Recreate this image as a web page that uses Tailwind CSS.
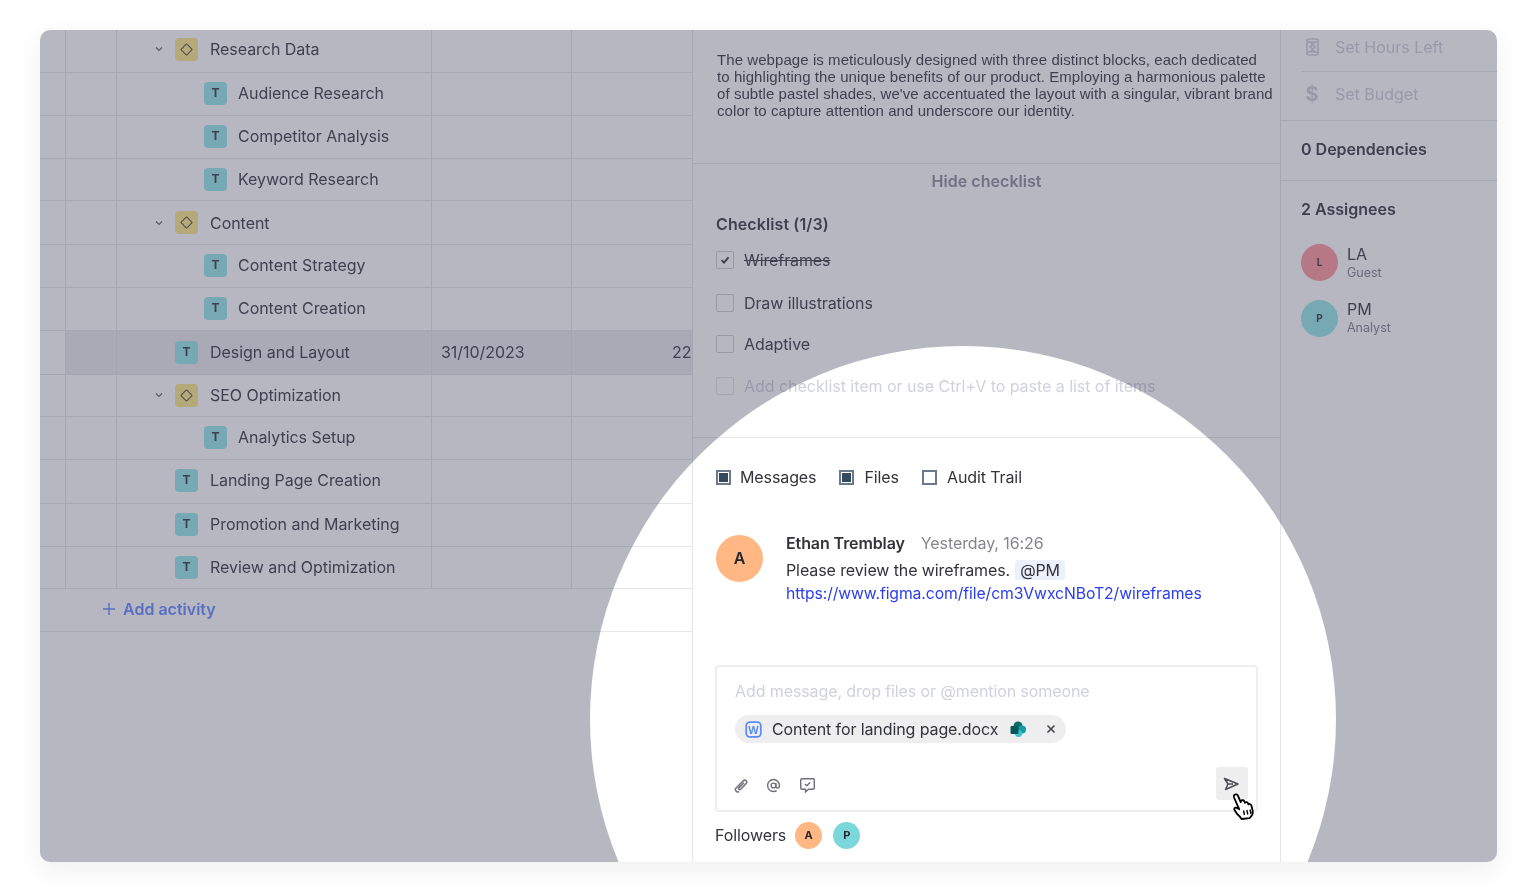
<!DOCTYPE html>
<html lang="en">
<head>
<meta charset="utf-8">
<script src="https://cdn.jsdelivr.net/npm/@tailwindcss/browser@4"></script>
<title>Task detail</title>
</head>
<body class="bg-white">
<div class="w-[1536px] h-[896px] pt-[30px] pl-[40px] bg-white font-['Inter',sans-serif] text-[#3f3f48] tracking-[-0.1px]">
<div class="relative w-[1457px] h-[832px] rounded-[10px] overflow-hidden flex bg-white shadow-[0_8px_24px_rgba(60,60,90,0.08)] blur-[0.4px]">

  <!-- Table -->
  <div class="w-[652px] shrink-0 flex flex-col text-[16px] tracking-[-0.04px]">
    <div class="h-[43px] flex border-b border-[#e6e6ea]"><div class="w-[26px] border-r border-[#e6e6ea]"></div><div class="w-[51px] border-r border-[#e6e6ea]"></div><div class="w-[315px] border-r border-[#e6e6ea] flex items-center pl-[37px] pb-[4px]"><svg class="w-[10px] h-[10px] mr-[11px]" viewBox="0 0 10 10" fill="none" stroke="#6b6b75" stroke-width="1.2"><path d="M2 3.5 5 6.5 8 3.5"/></svg><div class="w-[23px] h-[23px] rounded-[4px] bg-[#ffe98c] flex items-center justify-center mr-[12px]"><div class="w-[9px] h-[9px] rotate-45 border border-[#56524a] rounded-[1px]"></div></div><span>Research Data</span></div><div class="w-[140px] border-r border-[#e6e6ea]"></div></div>

    <div class="h-[43px] flex border-b border-[#e6e6ea]"><div class="w-[26px] border-r border-[#e6e6ea]"></div><div class="w-[51px] border-r border-[#e6e6ea]"></div><div class="w-[315px] border-r border-[#e6e6ea] flex items-center pl-[87px] pb-[2px]"><div class="w-[23px] h-[23px] rounded-[4px] bg-[#99e8ea] flex items-center justify-center mr-[11px] text-[12px] font-bold">T</div><span>Audience Research</span></div><div class="w-[140px] border-r border-[#e6e6ea]"></div></div>

    <div class="h-[43px] flex border-b border-[#e6e6ea]"><div class="w-[26px] border-r border-[#e6e6ea]"></div><div class="w-[51px] border-r border-[#e6e6ea]"></div><div class="w-[315px] border-r border-[#e6e6ea] flex items-center pl-[87px] pb-[2px]"><div class="w-[23px] h-[23px] rounded-[4px] bg-[#99e8ea] flex items-center justify-center mr-[11px] text-[12px] font-bold">T</div><span>Competitor Analysis</span></div><div class="w-[140px] border-r border-[#e6e6ea]"></div></div>

    <div class="h-[42px] flex border-b border-[#e6e6ea]"><div class="w-[26px] border-r border-[#e6e6ea]"></div><div class="w-[51px] border-r border-[#e6e6ea]"></div><div class="w-[315px] border-r border-[#e6e6ea] flex items-center pl-[87px] pb-[1px]"><div class="w-[23px] h-[23px] rounded-[4px] bg-[#99e8ea] flex items-center justify-center mr-[11px] text-[12px] font-bold">T</div><span>Keyword Research</span></div><div class="w-[140px] border-r border-[#e6e6ea]"></div></div>

    <div class="h-[44px] flex border-b border-[#e6e6ea]"><div class="w-[26px] border-r border-[#e6e6ea]"></div><div class="w-[51px] border-r border-[#e6e6ea]"></div><div class="w-[315px] border-r border-[#e6e6ea] flex items-center pl-[37px]"><svg class="w-[10px] h-[10px] mr-[11px]" viewBox="0 0 10 10" fill="none" stroke="#6b6b75" stroke-width="1.2"><path d="M2 3.5 5 6.5 8 3.5"/></svg><div class="w-[23px] h-[23px] rounded-[4px] bg-[#ffe98c] flex items-center justify-center mr-[12px]"><div class="w-[9px] h-[9px] rotate-45 border border-[#56524a] rounded-[1px]"></div></div><span>Content</span></div><div class="w-[140px] border-r border-[#e6e6ea]"></div></div>

    <div class="h-[43px] flex border-b border-[#e6e6ea]"><div class="w-[26px] border-r border-[#e6e6ea]"></div><div class="w-[51px] border-r border-[#e6e6ea]"></div><div class="w-[315px] border-r border-[#e6e6ea] flex items-center pl-[87px] pb-[2px]"><div class="w-[23px] h-[23px] rounded-[4px] bg-[#99e8ea] flex items-center justify-center mr-[11px] text-[12px] font-bold">T</div><span>Content Strategy</span></div><div class="w-[140px] border-r border-[#e6e6ea]"></div></div>

    <div class="h-[43px] flex border-b border-[#e6e6ea]"><div class="w-[26px] border-r border-[#e6e6ea]"></div><div class="w-[51px] border-r border-[#e6e6ea]"></div><div class="w-[315px] border-r border-[#e6e6ea] flex items-center pl-[87px] pb-[2px]"><div class="w-[23px] h-[23px] rounded-[4px] bg-[#99e8ea] flex items-center justify-center mr-[11px] text-[12px] font-bold">T</div><span>Content Creation</span></div><div class="w-[140px] border-r border-[#e6e6ea]"></div></div>

    <div class="h-[44px] flex border-b border-[#e2e2e6]"><div class="w-[26px] border-r border-[#e6e6ea]"></div><div class="flex-1 flex bg-[#ebebee] overflow-hidden"><div class="w-[51px] shrink-0 border-r border-[#e2e2e6]"></div><div class="w-[315px] shrink-0 border-r border-[#e2e2e6] flex items-center pl-[58px] pb-[1px]"><div class="w-[23px] h-[23px] rounded-[4px] bg-[#99e8ea] flex items-center justify-center mr-[12px] text-[12px] font-bold">T</div><span>Design and Layout</span></div><div class="w-[140px] shrink-0 border-r border-[#e2e2e6] flex items-center pl-[9px] pb-[1px]">31/10/2023</div><div class="flex-1 flex items-center pl-[100px] pb-[1px] whitespace-nowrap">22/11/2023</div></div></div>

    <div class="h-[42px] flex border-b border-[#e6e6ea]"><div class="w-[26px] border-r border-[#e6e6ea]"></div><div class="w-[51px] border-r border-[#e6e6ea]"></div><div class="w-[315px] border-r border-[#e6e6ea] flex items-center pl-[37px] pb-[1px]"><svg class="w-[10px] h-[10px] mr-[11px]" viewBox="0 0 10 10" fill="none" stroke="#6b6b75" stroke-width="1.2"><path d="M2 3.5 5 6.5 8 3.5"/></svg><div class="w-[23px] h-[23px] rounded-[4px] bg-[#ffe98c] flex items-center justify-center mr-[12px]"><div class="w-[9px] h-[9px] rotate-45 border border-[#56524a] rounded-[1px]"></div></div><span>SEO Optimization</span></div><div class="w-[140px] border-r border-[#e6e6ea]"></div></div>

    <div class="h-[43px] flex border-b border-[#e6e6ea]"><div class="w-[26px] border-r border-[#e6e6ea]"></div><div class="w-[51px] border-r border-[#e6e6ea]"></div><div class="w-[315px] border-r border-[#e6e6ea] flex items-center pl-[87px] pb-[2px]"><div class="w-[23px] h-[23px] rounded-[4px] bg-[#99e8ea] flex items-center justify-center mr-[11px] text-[12px] font-bold">T</div><span>Analytics Setup</span></div><div class="w-[140px] border-r border-[#e6e6ea]"></div></div>

    <div class="h-[44px] flex border-b border-[#e6e6ea]"><div class="w-[26px] border-r border-[#e6e6ea]"></div><div class="w-[51px] border-r border-[#e6e6ea]"></div><div class="w-[315px] border-r border-[#e6e6ea] flex items-center pl-[58px] pb-[3px]"><div class="w-[23px] h-[23px] rounded-[4px] bg-[#99e8ea] flex items-center justify-center mr-[12px] text-[12px] font-bold">T</div><span>Landing Page Creation</span></div><div class="w-[140px] border-r border-[#e6e6ea]"></div></div>

    <div class="h-[43px] flex border-b border-[#e6e6ea]"><div class="w-[26px] border-r border-[#e6e6ea]"></div><div class="w-[51px] border-r border-[#e6e6ea]"></div><div class="w-[315px] border-r border-[#e6e6ea] flex items-center pl-[58px] pb-[2px]"><div class="w-[23px] h-[23px] rounded-[4px] bg-[#99e8ea] flex items-center justify-center mr-[12px] text-[12px] font-bold">T</div><span>Promotion and Marketing</span></div><div class="w-[140px] border-r border-[#e6e6ea]"></div></div>

    <div class="h-[42px] flex border-b border-[#e6e6ea]"><div class="w-[26px] border-r border-[#e6e6ea]"></div><div class="w-[51px] border-r border-[#e6e6ea]"></div><div class="w-[315px] border-r border-[#e6e6ea] flex items-center pl-[58px] pb-[1px]"><div class="w-[23px] h-[23px] rounded-[4px] bg-[#99e8ea] flex items-center justify-center mr-[12px] text-[12px] font-bold">T</div><span>Review and Optimization</span></div><div class="w-[140px] border-r border-[#e6e6ea]"></div></div>

    <div class="h-[43px] flex items-center border-b border-[#e6e6ea] pl-[62px] pb-[2px] text-[#6a8bff] font-semibold tracking-normal"><svg class="w-[14px] h-[14px] mr-[7px]" viewBox="0 0 14 14" fill="none" stroke="#6a8bff" stroke-width="1.4"><path d="M7 1v12M1 7h12"/></svg><span>Add activity</span></div>
  </div>

  <!-- Main -->
  <div class="w-[589px] shrink-0 border-x border-[#e6e6ea] flex flex-col">
    <div class="h-[134px] border-b border-[#e6e6ea] pl-[24px] pt-[21px] font-['Liberation_Sans',sans-serif] text-[15px] tracking-[0.07px] leading-[17px] whitespace-nowrap">
      The webpage is meticulously designed with three distinct blocks, each dedicated<br>
      to highlighting the unique benefits of our product. Employing a harmonious palette<br>
      of subtle pastel shades, we've accentuated the layout with a singular, vibrant brand<br>
      color to capture attention and underscore our identity.
    </div>
    <div class="h-[274px] border-b border-[#e6e6ea] pl-[23px] flex flex-col">
      <div class="h-[34px] shrink-0 flex items-center justify-center pr-[23px] font-semibold text-[#8f909c] tracking-[0.05px]">Hide checklist</div>
      <div class="h-[52px] shrink-0 flex items-center font-semibold text-[16px] tracking-[0.1px]">Checklist (1/3)</div>
      <div class="h-[42px] shrink-0 flex items-center -mt-[11px]"><div class="w-[18px] h-[18px] rounded-[2px] border border-[#cfcfd6] flex items-center justify-center mr-[10px]"><svg class="w-[12px] h-[12px]" viewBox="0 0 12 12" fill="none" stroke="#3a3a44" stroke-width="1.8"><path d="M2.5 6.2 5 8.600 9.500 3.400"/></svg></div><span class="line-through">Wireframes</span></div>
      <div class="h-[43px] shrink-0 flex items-center"><div class="w-[18px] h-[18px] rounded-[2px] border border-[#cfcfd6] mr-[10px]"></div><span>Draw illustrations</span></div>
      <div class="h-[41px] shrink-0 flex items-center pb-[1px]"><div class="w-[18px] h-[18px] rounded-[2px] border border-[#cfcfd6] mr-[10px]"></div><span>Adaptive</span></div>
      <div class="h-[42px] shrink-0 flex items-center"><div class="w-[18px] h-[18px] rounded-[2px] border border-[#e4e4e9] mr-[10px]"></div><span class="text-[#d0d1dc] tracking-[-0.04px]">Add checklist item or use Ctrl+V to paste a list of items</span></div>
    </div>
    <div class="flex items-center h-[79px] pl-[23px] pb-[1px] text-[#33333b]">
      <div class="w-[15px] h-[15px] border-2 border-[#6a7a8a] bg-[#34495e] mr-[9px] shadow-[inset_0_0_0_1px_#fff]"></div><span class="mr-[23px]">Messages</span>
      <div class="w-[15px] h-[15px] border-2 border-[#6a7a8a] bg-[#34495e] mr-[10px] shadow-[inset_0_0_0_1px_#fff]"></div><span class="mr-[23px]">Files</span>
      <div class="w-[15px] h-[15px] border-2 border-[#6a7a8a] mr-[10px]"></div><span>Audit Trail</span>
    </div>
    <div class="flex pl-[23px] pt-[18px] h-[148px] shrink-0">
      <div class="w-[47px] h-[47px] rounded-full bg-[#ffb883] flex items-center justify-center font-semibold text-[#26262c] mr-[23px] shrink-0 pb-[2px]">A</div>
      <div class="flex flex-col -mt-[5px]">
        <div class="h-[26px] flex items-center"><span class="font-semibold text-[#33333b]">Ethan Tremblay</span><span class="ml-[16px] text-[#85858f]">Yesterday, 16:26</span></div>
        <div class="h-[28px] flex items-center text-[#33333b]"><span>Please review the wireframes.</span><span class="ml-[5px] px-[5px] bg-[#ecf0fb] rounded-[3px] leading-[20px]">@PM</span></div>
        <a class="h-[20px] flex items-center text-[#2b3df0] text-[15.75px]">https://www.figma.com/file/cm3VwxcNBoT2/wireframes</a>
      </div>
    </div>
    <div class="ml-[22px] w-[543px] h-[147px] shrink-0 border-2 border-[#eeeef0] rounded-[4px] flex flex-col pl-[18px] pr-[8px]">
      <div class="h-[48px] shrink-0 flex items-center text-[#d0d1dc]">Add message, drop files or @mention someone</div>
      <div class="w-[331px] h-[28px] shrink-0 rounded-full bg-[#eeeeee] flex items-center pl-[10px] text-[#33333b]">
        <svg class="w-[17px] h-[17px] mr-[10px] shrink-0" viewBox="0 0 17 17" fill="none"><rect x="1.200" y="1.200" width="14.600" height="14.600" rx="3.500" stroke="#5b8cf5" stroke-width="1.700"/><text x="8.500" y="12.800" text-anchor="middle" font-family="Liberation Sans" font-weight="700" font-size="11" fill="#5b8cf5">W</text></svg>
        <span class="whitespace-nowrap">Content for landing page.docx</span>
        <svg class="w-[18px] h-[18px] ml-[11px] shrink-0" viewBox="0 0 18 18"><circle cx="9" cy="6" r="4.500" fill="#0b6a6e"/><circle cx="13" cy="9.500" r="4" fill="#1a9ba1"/><circle cx="9.500" cy="13.500" r="3.500" fill="#37c6d0"/><rect x="1.500" y="6" width="8" height="8" rx="1" fill="#04585c"/></svg>
        <svg class="w-[10px] h-[10px] ml-[19px] shrink-0" viewBox="0 0 10 10" fill="none" stroke="#44444c" stroke-width="1.600"><path d="M1.500 1.500l7 7M8.500 1.500l-7 7"/></svg>
      </div>
      <div class="flex-1 flex items-end justify-between pb-[10px]">
        <div class="flex items-center gap-[17px] pb-[6px] -ml-[1px]">
          <svg class="w-[15px] h-[15px]" viewBox="0 0 15 15" fill="none" stroke="#6f6f78" stroke-width="1.500"><path d="M5 13.500c-1 .6-2.300.3-3-.5-.8-.9-.7-2.200.1-3L9 3c1-1 2.400-1 3.200-.2.800.9.700 2.100-.2 3L6.600 11.200c-.5.500-1.200.6-1.700.1s-.4-1.100.1-1.700L10 4.800"/></svg>
          <svg class="w-[15px] h-[15px]" viewBox="0 0 15 15" fill="none" stroke="#6f6f78" stroke-width="1.400"><circle cx="7.500" cy="7.500" r="2.400"/><path d="M9.900 5v3.600c0 1 .7 1.500 1.500 1.500s2-.8 2-2.600c0-3.200-2.600-6-5.900-6S1.600 4.200 1.600 7.500s2.600 6 5.900 6c1.300 0 2.300-.3 3.200-.9"/></svg>
          <svg class="w-[17px] h-[17px] ml-[1px]" viewBox="0 0 17 17" fill="none" stroke="#6f6f78" stroke-width="1.400"><path d="M3 1.800h11c.8 0 1.300.6 1.300 1.300v7.800c0 .7-.5 1.300-1.300 1.300H9.500L6.500 15v-2.800H3c-.8 0-1.300-.6-1.300-1.300V3.100c0-.7.5-1.300 1.300-1.300z"/><path d="M6 7l1.800 1.700L11 5.500"/></svg>
        </div>
        <div class="w-[32px] h-[33px] rounded-[3px] bg-[#eeeeee] flex items-center justify-center pr-[2px]">
          <svg class="w-[16px] h-[16px]" viewBox="0 0 16 16" fill="none" stroke="#4c4c54" stroke-width="1.500" stroke-linejoin="round"><path d="M1.500 2.500 15 8 2.500 13.500 5 8z"/><path d="M5 8h5"/></svg>
        </div>
      </div>
    </div>
    <div class="h-[46px] ml-[22px] shrink-0 flex items-center">
      <span class="text-[#33333b] mr-[9px]">Followers</span>
      <div class="w-[27px] h-[27px] rounded-full bg-[#ffb883] flex items-center justify-center text-[11px] font-bold text-[#26262c] mr-[11px]">A</div>
      <div class="w-[27px] h-[27px] rounded-full bg-[#7bd8da] flex items-center justify-center text-[11px] font-bold text-[#26262c]">P</div>
    </div>
  </div>

  <!-- Right -->
  <div class="flex-1 flex flex-col tracking-normal">
    <div class="h-[91px] border-b border-[#e6e6ea] pl-[20px] text-[#cfd0d9]">
      <div class="h-[42px] border-b border-[#e6e6ea] flex items-center pb-[8px]">
        <svg class="w-[22px] h-[18px] mr-[12px]" viewBox="0 0 22 18" fill="none" stroke="#cfd0d9" stroke-width="1.600"><rect x="6" y="1" width="11" height="16" rx="2"/><path d="M6 4h11M6 14h11M9 4l5 4.800-5 5.200M14 4l-5 4.800 5 5.200"/></svg>
        <span>Set Hours Left</span>
      </div>
      <div class="h-[48px] flex items-center pb-[4px]">
        <span class="w-[22px] mr-[12px] text-center font-bold text-[20px]">$</span>
        <span>Set Budget</span>
      </div>
    </div>
    <div class="h-[60px] border-b border-[#e6e6ea] pl-[20px] pb-[4px] flex items-center font-semibold text-[16px]">0 Dependencies</div>
    <div class="pl-[20px] flex flex-col">
      <div class="h-[56px] flex items-center font-semibold text-[16px]">2 Assignees</div>
      <div class="h-[55px] flex items-center -mt-[2px]"><div class="w-[37px] h-[37px] rounded-full bg-[#ff9a9e] flex items-center justify-center text-[10px] font-bold mr-[9px]">L</div><div class="flex flex-col"><span class="leading-[20px]">LA</span><span class="text-[12.500px] leading-[18px] text-[#85858f]">Guest</span></div></div>
      <div class="h-[56px] flex items-center"><div class="w-[37px] h-[37px] rounded-full bg-[#99e8ea] flex items-center justify-center text-[10px] font-bold mr-[9px]">P</div><div class="flex flex-col"><span class="leading-[20px]">PM</span><span class="text-[12.500px] leading-[18px] text-[#85858f]">Analyst</span></div></div>
    </div>
  </div>

  <!-- Dim overlay with a round spotlight -->
  <div class="absolute left-[550px] top-[316px] w-[746px] h-[746px] rounded-full shadow-[0_0_0_1400px_rgba(63,65,92,0.38)]"></div>

  <!-- Cursor -->
  <svg class="absolute left-[1192px] top-[762px] w-[24px] h-[29px]" viewBox="0 0 24 29" fill="#fff" stroke="#000" stroke-width="1.800" stroke-linejoin="round"><path d="M2.500 2.800c1.300-.9 2.900-.4 3.500 1l2.700 6.400.4-1.200c.5-1.200 2.800-1 3.300.5l.5 1.300c.5-1.100 2.600-.9 3.100.5l.4 1.100c.7-.8 2.500-.5 2.900.8l1.300 5.300c.6 2.700-.1 4.500-1.700 6.200l-1.400 1.400-7.900.9c-1-1.800-2.500-3.400-4.700-5.300L2.600 18c-1-1 .2-2.900 1.700-2.300l3 1.600L2 5.500c-.4-1-.3-2 .5-2.700z"/><path d="M11.500 18.500l1 4.500M14.800 18l1 4.500M18 17.500l1 4.500" stroke-width="1.400"/></svg>
</div>
</div>
</body>
</html>
